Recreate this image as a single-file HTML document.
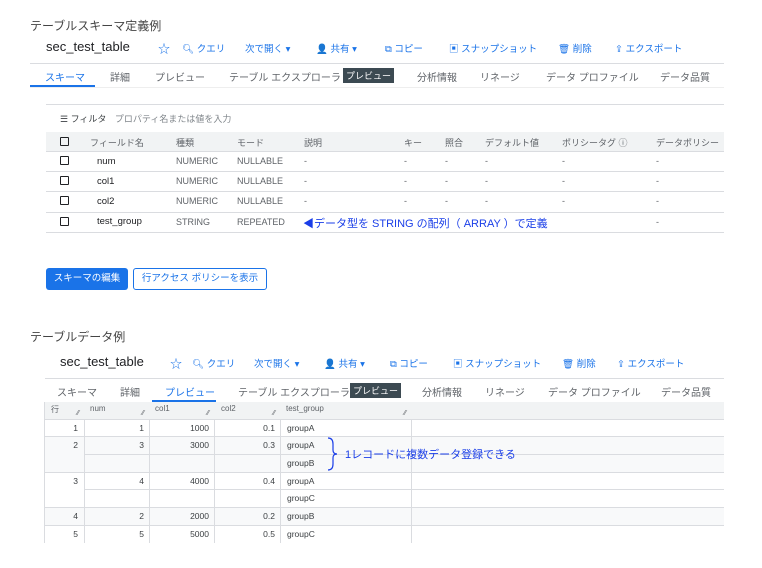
<!DOCTYPE html>
<html><head><meta charset="utf-8"><style>
*{margin:0;padding:0;box-sizing:border-box}
body{width:762px;height:568px;background:#fff;font-family:"Liberation Sans","Noto Sans CJK JP",sans-serif;position:relative;overflow:hidden;color:#3c4043}
.a{position:absolute;white-space:nowrap}
.t{font-size:12px;color:#444}
.nm{font-size:13px;color:#202124}
.tb{font-size:9.5px;color:#1a73e8}
.tab{font-size:10px;color:#5f6368}
.badge{background:#3c4a52;color:#fff;font-size:9px;padding:1px 3px;}
.hl{position:absolute;height:1px;background:#dadce0}
.vl{position:absolute;width:1px;background:#dadce0}
.s{font-size:9px;color:#5f6368}
.cb{position:absolute;width:9px;height:9px;border:1.5px solid #202124;border-radius:1px}
.g{font-size:8.5px;color:#3c4043}
.r{text-align:right}
</style></head><body>
<!-- Section 1 -->
<div class="a t" style="left:30px;top:17px">テーブルスキーマ定義例</div>
<div class="a nm" style="left:46px;top:39px">sec_test_table</div>
<div class="a tb" style="left:158px;top:40px;font-size:12px">☆</div>
<div class="a tb" style="left:182px;top:41px">🔍︎ クエリ</div>
<div class="a tb" style="left:245px;top:41px">次で開く ▾</div>
<div class="a tb" style="left:316px;top:41px">👤 共有 ▾</div>
<div class="a tb" style="left:385px;top:41px">⧉ コピー</div>
<div class="a tb" style="left:449px;top:41px">▣ スナップショット</div>
<div class="a tb" style="left:558px;top:41px">🗑︎ 削除</div>
<div class="a tb" style="left:615px;top:41px">⇪ エクスポート</div>
<div class="hl" style="left:30px;top:63px;width:694px"></div>
<div class="a tab" style="left:45px;top:69px;color:#1a73e8">スキーマ</div>
<div class="a" style="left:30px;top:85px;width:35px;height:2px;width:65px;background:#1a73e8"></div>
<div class="a tab" style="left:110px;top:69px">詳細</div>
<div class="a tab" style="left:155px;top:69px">プレビュー</div>
<div class="a tab" style="left:229px;top:69px">テーブル エクスプローラ</div>
<div class="a badge" style="left:343px;top:68px">プレビュー</div>
<div class="a tab" style="left:417px;top:69px">分析情報</div>
<div class="a tab" style="left:480px;top:69px">リネージ</div>
<div class="a tab" style="left:546px;top:69px">データ プロファイル</div>
<div class="a tab" style="left:660px;top:69px">データ品質</div>
<div class="hl" style="left:30px;top:87px;width:694px;background:#eee"></div>
<div class="hl" style="left:46px;top:104px;width:678px"></div>
<div class="a s" style="left:60px;top:112px;color:#3c4043">☰ フィルタ <span style="color:#80868b;margin-left:6px">プロパティ名または値を入力</span></div>
<div class="a" style="left:46px;top:132px;width:678px;height:19px;background:#f1f3f4"></div>
<div class="cb" style="left:60px;top:137px"></div>
<div class="a s" style="left:90px;top:136px">フィールド名</div>
<div class="a s" style="left:176px;top:136px">種類</div>
<div class="a s" style="left:237px;top:136px">モード</div>
<div class="a s" style="left:304px;top:136px">説明</div>
<div class="a s" style="left:404px;top:136px">キー</div>
<div class="a s" style="left:445px;top:136px">照合</div>
<div class="a s" style="left:485px;top:136px">デフォルト値</div>
<div class="a s" style="left:562px;top:136px">ポリシータグ ⓘ</div>
<div class="a s" style="left:656px;top:136px">データポリシー</div>
<div class="hl" style="left:46px;top:151px;width:678px"></div>
<div class="hl" style="left:46px;top:171px;width:678px"></div>
<div class="hl" style="left:46px;top:191px;width:678px"></div>
<div class="hl" style="left:46px;top:212px;width:678px"></div>
<div class="hl" style="left:46px;top:232px;width:678px"></div>
<!-- rows -->
<div class="cb" style="left:60px;top:156px"></div><div class="a" style="left:97px;top:156px;font-size:9.5px;color:#202124">num</div>
<div class="a s" style="left:176px;top:156px">NUMERIC</div><div class="a s" style="left:237px;top:156px">NULLABLE</div>
<div class="a s" style="left:304px;top:156px">-</div><div class="a s" style="left:404px;top:156px">-</div><div class="a s" style="left:445px;top:156px">-</div><div class="a s" style="left:485px;top:156px">-</div><div class="a s" style="left:562px;top:156px">-</div><div class="a s" style="left:656px;top:156px">-</div>
<div class="cb" style="left:60px;top:176px"></div><div class="a" style="left:97px;top:176px;font-size:9.5px;color:#202124">col1</div>
<div class="a s" style="left:176px;top:176px">NUMERIC</div><div class="a s" style="left:237px;top:176px">NULLABLE</div>
<div class="a s" style="left:304px;top:176px">-</div><div class="a s" style="left:404px;top:176px">-</div><div class="a s" style="left:445px;top:176px">-</div><div class="a s" style="left:485px;top:176px">-</div><div class="a s" style="left:562px;top:176px">-</div><div class="a s" style="left:656px;top:176px">-</div>
<div class="cb" style="left:60px;top:196px"></div><div class="a" style="left:97px;top:196px;font-size:9.5px;color:#202124">col2</div>
<div class="a s" style="left:176px;top:196px">NUMERIC</div><div class="a s" style="left:237px;top:196px">NULLABLE</div>
<div class="a s" style="left:304px;top:196px">-</div><div class="a s" style="left:404px;top:196px">-</div><div class="a s" style="left:445px;top:196px">-</div><div class="a s" style="left:485px;top:196px">-</div><div class="a s" style="left:562px;top:196px">-</div><div class="a s" style="left:656px;top:196px">-</div>
<div class="cb" style="left:60px;top:217px"></div><div class="a" style="left:97px;top:216px;font-size:9.5px;color:#202124">test_group</div>
<div class="a s" style="left:176px;top:217px">STRING</div><div class="a s" style="left:237px;top:217px">REPEATED</div>
<div class="a" style="left:303px;top:215px;font-size:11px;color:#1a3ee8">◀データ型を STRING の配列（ ARRAY ）で定義</div>
<div class="a s" style="left:656px;top:217px">-</div>
<div class="a" style="left:46px;top:268px;width:82px;height:22px;background:#1a73e8;border-radius:3px;color:#fff;font-size:9.5px;line-height:22px;text-align:center">スキーマの編集</div>
<div class="a" style="left:133px;top:268px;width:134px;height:22px;border:1px solid #1a73e8;border-radius:3px;color:#1a73e8;font-size:9.5px;line-height:20px;text-align:center">行アクセス ポリシーを表示</div>
<!-- Section 2 -->
<div class="a t" style="left:30px;top:328px">テーブルデータ例</div>
<div class="a nm" style="left:60px;top:354px">sec_test_table</div>
<div class="a tb" style="left:170px;top:355px;font-size:12px">☆</div>
<div class="a tb" style="left:192px;top:356px">🔍︎ クエリ</div>
<div class="a tb" style="left:254px;top:356px">次で開く ▾</div>
<div class="a tb" style="left:324px;top:356px">👤 共有 ▾</div>
<div class="a tb" style="left:390px;top:356px">⧉ コピー</div>
<div class="a tb" style="left:453px;top:356px">▣ スナップショット</div>
<div class="a tb" style="left:562px;top:356px">🗑︎ 削除</div>
<div class="a tb" style="left:617px;top:356px">⇪ エクスポート</div>
<div class="hl" style="left:45px;top:378px;width:679px"></div>
<div class="a tab" style="left:57px;top:384px">スキーマ</div>
<div class="a tab" style="left:120px;top:384px">詳細</div>
<div class="a tab" style="left:165px;top:384px;color:#1a73e8">プレビュー</div>
<div class="a" style="left:152px;top:400px;width:64px;height:2px;background:#1a73e8"></div>
<div class="a tab" style="left:238px;top:384px">テーブル エクスプローラ</div>
<div class="a badge" style="left:350px;top:383px">プレビュー</div>
<div class="a tab" style="left:422px;top:384px">分析情報</div>
<div class="a tab" style="left:485px;top:384px">リネージ</div>
<div class="a tab" style="left:548px;top:384px">データ プロファイル</div>
<div class="a tab" style="left:661px;top:384px">データ品質</div>
<!-- grid -->
<div class="a" style="left:44px;top:402px;width:680px;height:17px;background:#f1f3f4"></div>
<div class="a" style="left:44px;top:436px;width:680px;height:36px;background:#f8f9fa"></div>
<div class="a" style="left:44px;top:507px;width:680px;height:18px;background:#f8f9fa"></div>
<div class="a" style="left:44px;top:402px;width:1px;height:141px;background:#dadce0"></div>
<div class="vl" style="left:84px;top:419px;height:124px"></div>
<div class="vl" style="left:149px;top:419px;height:124px"></div>
<div class="vl" style="left:214px;top:419px;height:124px"></div>
<div class="vl" style="left:280px;top:419px;height:124px"></div>
<div class="vl" style="left:411px;top:419px;height:124px"></div>
<div class="hl" style="left:44px;top:419px;width:680px"></div>
<div class="hl" style="left:44px;top:436px;width:680px"></div>
<div class="hl" style="left:84px;top:454px;width:640px"></div>
<div class="hl" style="left:44px;top:472px;width:680px"></div>
<div class="hl" style="left:84px;top:489px;width:640px"></div>
<div class="hl" style="left:44px;top:507px;width:680px"></div>
<div class="hl" style="left:44px;top:525px;width:680px"></div>
<div class="a s" style="left:51px;top:404px;font-size:8px">行</div>
<div class="a s" style="left:90px;top:404px;font-size:8px">num</div>
<div class="a s" style="left:155px;top:404px;font-size:8px">col1</div>
<div class="a s" style="left:221px;top:404px;font-size:8px">col2</div>
<div class="a s" style="left:286px;top:404px;font-size:8px">test_group</div>
<div class="a s" style="left:77px;top:410px;font-size:7px">⁄⁄</div>
<div class="a s" style="left:142px;top:410px;font-size:7px">⁄⁄</div>
<div class="a s" style="left:207px;top:410px;font-size:7px">⁄⁄</div>
<div class="a s" style="left:273px;top:410px;font-size:7px">⁄⁄</div>
<div class="a s" style="left:404px;top:410px;font-size:7px">⁄⁄</div>
<!-- cells -->
<div class="a g r" style="left:44px;top:423px;width:34px">1</div><div class="a g r" style="left:84px;top:423px;width:60px">1</div><div class="a g r" style="left:149px;top:423px;width:60px">1000</div><div class="a g r" style="left:214px;top:423px;width:61px">0.1</div><div class="a g" style="left:287px;top:423px">groupA</div>
<div class="a g r" style="left:44px;top:440px;width:34px">2</div><div class="a g r" style="left:84px;top:440px;width:60px">3</div><div class="a g r" style="left:149px;top:440px;width:60px">3000</div><div class="a g r" style="left:214px;top:440px;width:61px">0.3</div><div class="a g" style="left:287px;top:440px">groupA</div>
<div class="a g" style="left:287px;top:458px">groupB</div>
<div class="a g r" style="left:44px;top:476px;width:34px">3</div><div class="a g r" style="left:84px;top:476px;width:60px">4</div><div class="a g r" style="left:149px;top:476px;width:60px">4000</div><div class="a g r" style="left:214px;top:476px;width:61px">0.4</div><div class="a g" style="left:287px;top:476px">groupA</div>
<div class="a g" style="left:287px;top:493px">groupC</div>
<div class="a g r" style="left:44px;top:511px;width:34px">4</div><div class="a g r" style="left:84px;top:511px;width:60px">2</div><div class="a g r" style="left:149px;top:511px;width:60px">2000</div><div class="a g r" style="left:214px;top:511px;width:61px">0.2</div><div class="a g" style="left:287px;top:511px">groupB</div>
<div class="a g r" style="left:44px;top:529px;width:34px">5</div><div class="a g r" style="left:84px;top:529px;width:60px">5</div><div class="a g r" style="left:149px;top:529px;width:60px">5000</div><div class="a g r" style="left:214px;top:529px;width:61px">0.5</div><div class="a g" style="left:287px;top:529px">groupC</div>
<svg class="a" style="left:326px;top:436px" width="16" height="36"><path d="M2 2 Q7 2 7 8 L7 14 Q7 18 11 18 Q7 18 7 22 L7 28 Q7 34 2 34" fill="none" stroke="#1a3ee8" stroke-width="1.2"/></svg>
<div class="a" style="left:345px;top:446px;font-size:11px;color:#1a3ee8">1レコードに複数データ登録できる</div>
</body></html>
